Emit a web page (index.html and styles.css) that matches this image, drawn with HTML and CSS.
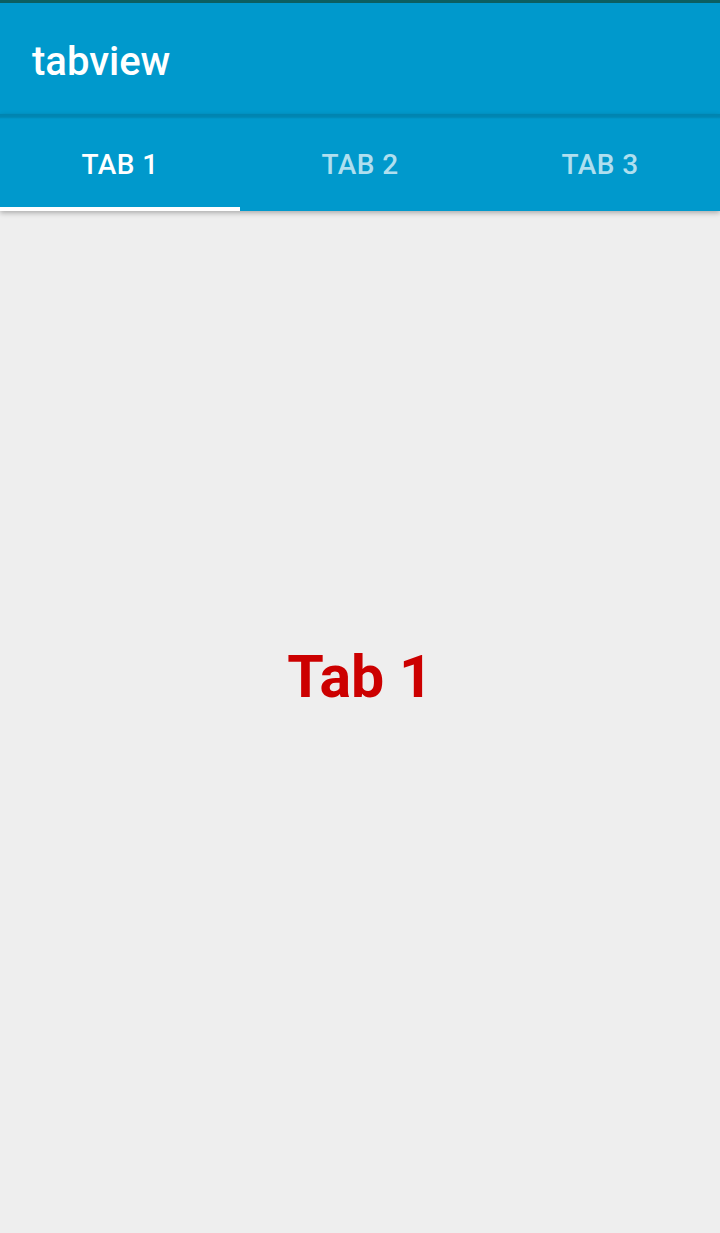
FILE: index.html
```html
<!DOCTYPE html>
<html>
<head>
<meta charset="utf-8">
<link rel="stylesheet" href="styles.css">
</head>
<body>
<div class="status"></div>
<header class="appbar"><span class="title">tabview</span></header>
<nav class="tabs">
  <div class="tab active">TAB 1</div>
  <div class="tab">TAB 2</div>
  <div class="tab">TAB 3</div>
</nav>
<main class="content"><span class="label">Tab 1</span></main>
</body>
</html>
```
FILE: styles.css
```css
* { box-sizing: border-box; }
html, body { margin: 0; padding: 0; }
body {
  width: 720px;
  height: 1233px;
  overflow: hidden;
  background: #eeeeee;
  font-family: Roboto, "Noto Sans", sans-serif;
}
.status { height: 3px; background: #0c5f60; }
.appbar {
  height: 111px;
  background: #0099cc;
  display: flex;
  align-items: center;
  padding: 0 32px;
}
.title {
  color: #ffffff;
  font-size: 40px;
  font-weight: 500;
  margin-top: 6px;
}
.tabs {
  position: relative;
  height: 97px;
  background: #0099cc;
  display: flex;
  box-shadow: 0 2px 5px rgba(0,0,0,0.28);
  z-index: 1;
}
.tabs::before {
  content: "";
  position: absolute;
  left: 0;
  right: 0;
  top: 0;
  height: 5px;
  background: linear-gradient(rgba(0,0,0,0.14), rgba(0,0,0,0.12) 60%, rgba(0,0,0,0));
}
.tab {
  flex: 1;
  display: flex;
  align-items: center;
  justify-content: center;
  font-size: 28px;
  font-weight: 500;
  letter-spacing: 0.4px;
  color: rgba(255,255,255,0.7);
  padding-top: 7px;
  border-bottom: 4px solid transparent;
}
.tab.active {
  color: #ffffff;
  border-bottom-color: #ffffff;
}
.content {
  height: 1022px;
  display: flex;
  align-items: center;
  justify-content: center;
  padding-bottom: 92px;
}
.label {
  color: #cc0000;
  font-size: 59px;
  font-weight: 700;
}
```
